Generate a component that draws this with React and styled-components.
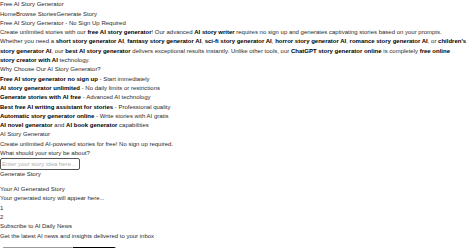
import React from 'react';
import styled, { createGlobalStyle } from 'styled-components';

const Global = createGlobalStyle`
    html, body {
        margin: 0;
        padding: 0;
        background: #fff;
    }
    body {
        font-family: "Liberation Sans", Arial, sans-serif;
        font-size: 6px;
        line-height: 9.3px;
        color: #2a2a2a;
    }
`;

const Page = styled.div`
    width: 469px;
    padding-top: 0.3px;
`;

const Header = styled.header`
    display: block;
`;

const Logo = styled.div`
    font-weight: normal;
`;

const Nav = styled.nav`
    display: flex;
`;

const NavLink = styled.a`
    color: inherit;
    text-decoration: none;
`;

const Title = styled.h1`
    margin: 0;
    font-size: inherit;
    font-weight: normal;
`;

const Text = styled.p`
    margin: 0;
`;

const Strong = styled.strong`
    font-weight: bold;
    color: #000;
`;

const Keep = styled.span`
    white-space: nowrap;
`;

const List = styled.ul`
    margin: 0;
    padding: 0;
    list-style: none;
`;

const Item = styled.li`
    margin: 0;
`;

const Label = styled.label`
    display: block;
`;

const IdeaInput = styled.input`
    display: block;
    box-sizing: border-box;
    width: 80px;
    height: 11.4px;
    margin: 0;
    padding: 0 1px;
    border: 1px solid #555;
    border-radius: 2px;
    font: inherit;
    color: #222;
    &::placeholder {
        color: #b0b0b0;
    }
`;

const PlainButton = styled.button`
    display: block;
    margin: 0;
    padding: 0;
    border: none;
    background: none;
    font: inherit;
    color: inherit;
    line-height: 9.3px;
`;

const Output = styled.section`
    margin-top: 6px;
`;

const Footer = styled.footer`
    display: block;
`;

const Subscribe = styled.form`
    display: flex;
    margin: 6px 0 0;
    padding-left: 2px;
`;

const EmailInput = styled.input`
    box-sizing: border-box;
    width: 71px;
    height: 18px;
    margin: 0;
    border: 1px solid #999;
    border-radius: 2px 0 0 2px;
    font: inherit;
`;

const SubmitButton = styled.button`
    width: 43px;
    height: 18px;
    margin: 0;
    border: none;
    border-radius: 0 2px 2px 0;
    background: #000;
    color: #fff;
    font: inherit;
    line-height: 18px;
`;

export default function App() {
    return (
        <Page>
            <Global />
            <Header>
                <Logo>Free AI Story Generator</Logo>
                <Nav>
                    <NavLink href="#">Home</NavLink>
                    <NavLink href="#">Browse Stories</NavLink>
                    <NavLink href="#">Generate Story</NavLink>
                </Nav>
            </Header>
            <main>
                <Title>Free AI Story Generator - No Sign Up Required</Title>
                <Text>
                    Create unlimited stories with our <Strong>free AI story generator</Strong>! Our advanced{' '}
                    <Strong>AI story writer</Strong> requires no sign up and generates captivating stories based on your prompts.
                </Text>
                <Text>
                    Whether you need a <Strong>short story generator AI</Strong>, <Strong>fantasy story generator AI</Strong>,{' '}
                    <Strong>sci-fi story generator AI</Strong>, <Strong>horror story generator AI</Strong>,{' '}
                    <Strong>romance story generator AI</Strong>, or <Strong>children's story generator AI</Strong>, our{' '}
                    <Strong>best AI story generator</Strong> delivers exceptional results instantly. Unlike other tools, our{' '}
                    <Strong>ChatGPT story generator online</Strong> is completely{' '}
                    <Strong>free online <Keep>story creator</Keep> with AI</Strong> technology.
                </Text>
                <Title as="h2">Why Choose Our AI Story Generator?</Title>
                <List>
                    <Item><Strong>Free AI story generator no sign up</Strong> - Start immediately</Item>
                    <Item><Strong>AI story generator unlimited</Strong> - No daily limits or restrictions</Item>
                    <Item><Strong>Generate stories with AI free</Strong> - Advanced AI technology</Item>
                    <Item><Strong>Best free AI writing assistant for stories</Strong> - Professional quality</Item>
                    <Item><Strong>Automatic story generator online</Strong> - Write stories with AI gratis</Item>
                    <Item><Strong>AI novel generator</Strong> and <Strong>AI book generator</Strong> capabilities</Item>
                </List>
                <Title as="h2">AI Story Generator</Title>
                <Text>Create unlimited AI-powered stories for free! No sign up required.</Text>
                <Label htmlFor="idea">What should your story be about?</Label>
                <IdeaInput id="idea" placeholder="Enter your story idea here..." />
                <PlainButton type="button">Generate Story</PlainButton>
                <Output>
                    <Title as="h3">Your AI Generated Story</Title>
                    <Text>Your generated story will appear here...</Text>
                    <Text>1</Text>
                    <Text>2</Text>
                </Output>
            </main>
            <Footer>
                <Title as="h3">Subscribe to AI Daily News</Title>
                <Text>Get the latest AI news and insights delivered to your inbox</Text>
                <Subscribe onSubmit={e => e.preventDefault()}>
                    <EmailInput type="email" />
                    <SubmitButton type="submit">Subscribe</SubmitButton>
                </Subscribe>
            </Footer>
        </Page>
    );
}
